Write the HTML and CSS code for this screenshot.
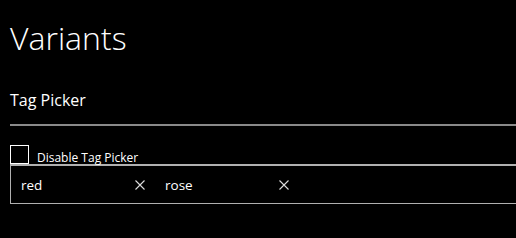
FILE: index.html
```html
<!DOCTYPE html>
<html lang="en">
<head>
  <meta charset="UTF-8">
  <title>Variants</title>
  <link rel="stylesheet" href="styles.css">
</head>
<body>
  <div class="page">
    <h1 class="title">Variants</h1>
    <h2 class="section">Tag Picker</h2>

    <label class="check">
      <span class="check-box"></span>
      <span class="check-label">Disable Tag Picker</span>
    </label>

    <div class="picker">
      <div class="tag">
        <span class="tag-text">red</span>
        <button class="tag-close" aria-label="Remove red">
          <svg width="10" height="10" viewBox="0 0 10 10"><path d="M0.5 0.5L9.5 9.5M9.5 0.5L0.5 9.5" stroke="currentColor" stroke-width="1.1" fill="none"/></svg>
        </button>
      </div>
      <div class="tag">
        <span class="tag-text">rose</span>
        <button class="tag-close" aria-label="Remove rose">
          <svg width="10" height="10" viewBox="0 0 10 10"><path d="M0.5 0.5L9.5 9.5M9.5 0.5L0.5 9.5" stroke="currentColor" stroke-width="1.1" fill="none"/></svg>
        </button>
      </div>
      <input class="picker-input" type="text">
    </div>
  </div>
</body>
</html>
```

FILE: styles.css
```css
body {
  margin: 0;
  padding: 0;
  background: #000;
  color: #fff;
  font-family: "Open Sans", "Noto Sans", sans-serif;
  overflow: hidden;
}
.page {
  padding-left: 10px;
}
.title {
  font-size: 32px;
  font-weight: 300;
  line-height: 40px;
  margin: 18px 0 0;
}
.section {
  font-size: 16px;
  font-weight: 400;
  line-height: 24px;
  margin: 30px 0 0;
  padding-bottom: 12px;
  border-bottom: 2px solid #8a8a8a;
}
.check {
  display: flex;
  align-items: center;
  gap: 8px;
  margin-top: 19px;
  height: 19px;
}
.check-box {
  box-sizing: border-box;
  width: 19px;
  height: 19px;
  border: 1px solid #fff;
}
.check-label {
  font-size: 12px;
  line-height: 19px;
  margin-top: 5px;
}
.picker {
  display: flex;
  align-items: center;
  height: 37px;
  margin-right: -20px;
  border: 1px solid #b0b0b0;
  border-top-width: 2px;
  box-sizing: content-box;
}
.tag {
  display: flex;
  align-items: center;
  width: 144px;
  height: 26px;
  margin-left: 2px;
}
.tag + .tag {
  margin-left: 0;
}
.tag-text {
  flex: 1;
  padding-left: 8px;
  font-size: 13.5px;
}
.tag-close {
  display: flex;
  align-items: center;
  justify-content: center;
  width: 30px;
  height: 26px;
  padding: 0 4px 0 0;
  border: none;
  background: none;
  color: #ddd;
}
.picker-input {
  flex: 1;
  border: none;
  background: none;
  outline: none;
  color: #fff;
}
```
